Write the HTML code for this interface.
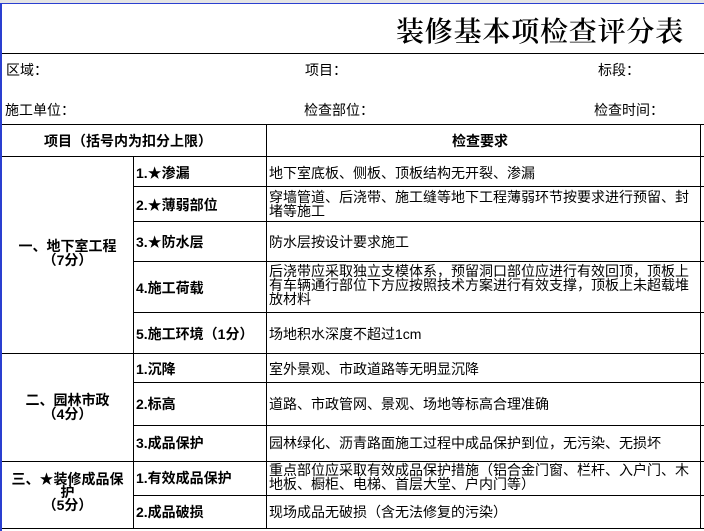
<!DOCTYPE html>
<html><head><meta charset="utf-8"><style>
body{margin:0;width:704px;height:531px;overflow:hidden;background:#fff;position:relative;font-family:"Liberation Sans","Noto Sans CJK SC",sans-serif;font-size:14px;color:#000}
.h{position:absolute;height:1px;background:#000}
.v{position:absolute;width:1px;background:#000}
.t{position:absolute;white-space:nowrap;line-height:14px}
.b{font-weight:bold}
.c{text-align:center}
</style></head><body>
<div style="position:absolute;left:0;top:0;width:704px;height:3px;background:#e4e4e4"></div>
<div style="position:absolute;left:0;top:3px;width:704px;height:1px;background:#2a3fd0"></div>
<div style="position:absolute;left:0;top:3px;width:2px;height:528px;background:#2a3fd0"></div>
<div class="t" style="left:396px;top:13px;font-family:'Noto Serif CJK SC',serif;font-size:28px;line-height:34px;font-weight:600;letter-spacing:0.8px">装修基本项检查评分表</div>
<div class="h" style="left:2px;top:53px;width:702px"></div>
<div class="t" style="left:6px;top:63px">区域：</div>
<div class="t" style="left:305px;top:63px">项目：</div>
<div class="t" style="left:598px;top:63px">标段：</div>
<div class="t" style="left:5px;top:103px">施工单位：</div>
<div class="t" style="left:304px;top:103px">检查部位：</div>
<div class="t" style="left:594px;top:103px">检查时间：</div>
<div class="h" style="left:2px;top:124px;width:702px"></div>
<div class="t b" style="left:44px;top:134px">项目（括号内为扣分上限）</div>
<div class="t b" style="left:452px;top:134px">检查要求</div>
<div class="h" style="left:2px;top:156px;width:702px"></div>
<div class="v" style="left:266px;top:124px;height:405px"></div>
<div class="v" style="left:700px;top:124px;height:405px"></div>
<div class="v" style="left:133px;top:156px;height:373px"></div>
<div class="h" style="left:133px;top:186px;width:571px"></div>
<div class="h" style="left:133px;top:221px;width:571px"></div>
<div class="h" style="left:133px;top:261px;width:571px"></div>
<div class="h" style="left:133px;top:312px;width:571px"></div>
<div class="h" style="left:2px;top:353px;width:702px"></div>
<div class="h" style="left:133px;top:382px;width:571px"></div>
<div class="h" style="left:133px;top:425px;width:571px"></div>
<div class="h" style="left:2px;top:461px;width:702px"></div>
<div class="h" style="left:133px;top:495px;width:571px"></div>
<div class="h" style="left:2px;top:528px;width:702px"></div>
<div class="t b c" style="left:2px;width:131px;top:239px">一、地下室工程<br>（7分）</div>
<div class="t b c" style="left:2px;width:131px;top:393px">二、园林市政<br>（4分）</div>
<div class="t b c" style="left:2px;width:131px;top:473px;line-height:13px">三、★装修成品保<br>护<br>（5分）</div>
<div class="t b" style="left:136px;top:166px">1.★渗漏</div>
<div class="t b" style="left:136px;top:198px">2.★薄弱部位</div>
<div class="t b" style="left:136px;top:235px">3.★防水层</div>
<div class="t b" style="left:136px;top:281px">4.施工荷载</div>
<div class="t b" style="left:136px;top:327px">5.施工环境（1分）</div>
<div class="t b" style="left:136px;top:362px">1.沉降</div>
<div class="t b" style="left:136px;top:397px">2.标高</div>
<div class="t b" style="left:136px;top:436px">3.成品保护</div>
<div class="t b" style="left:136px;top:471px">1.有效成品保护</div>
<div class="t b" style="left:136px;top:505px">2.成品破损</div>
<div class="t" style="left:269px;top:166px">地下室底板、侧板、顶板结构无开裂、渗漏</div>
<div class="t" style="left:269px;top:190px">穿墙管道、后浇带、施工缝等地下工程薄弱环节按要求进行预留、封<br>堵等施工</div>
<div class="t" style="left:269px;top:235px">防水层按设计要求施工</div>
<div class="t" style="left:269px;top:264px">后浇带应采取独立支模体系，预留洞口部位应进行有效回顶，顶板上<br>有车辆通行部位下方应按照技术方案进行有效支撑，顶板上未超载堆<br>放材料</div>
<div class="t" style="left:269px;top:327px">场地积水深度不超过1cm</div>
<div class="t" style="left:269px;top:362px">室外景观、市政道路等无明显沉降</div>
<div class="t" style="left:269px;top:397px">道路、市政管网、景观、场地等标高合理准确</div>
<div class="t" style="left:269px;top:436px">园林绿化、沥青路面施工过程中成品保护到位，无污染、无损坏</div>
<div class="t" style="left:269px;top:463px">重点部位应采取有效成品保护措施（铝合金门窗、栏杆、入户门、木<br>地板、橱柜、电梯、首层大堂、户内门等）</div>
<div class="t" style="left:269px;top:505px">现场成品无破损（含无法修复的污染）</div>
</body></html>
